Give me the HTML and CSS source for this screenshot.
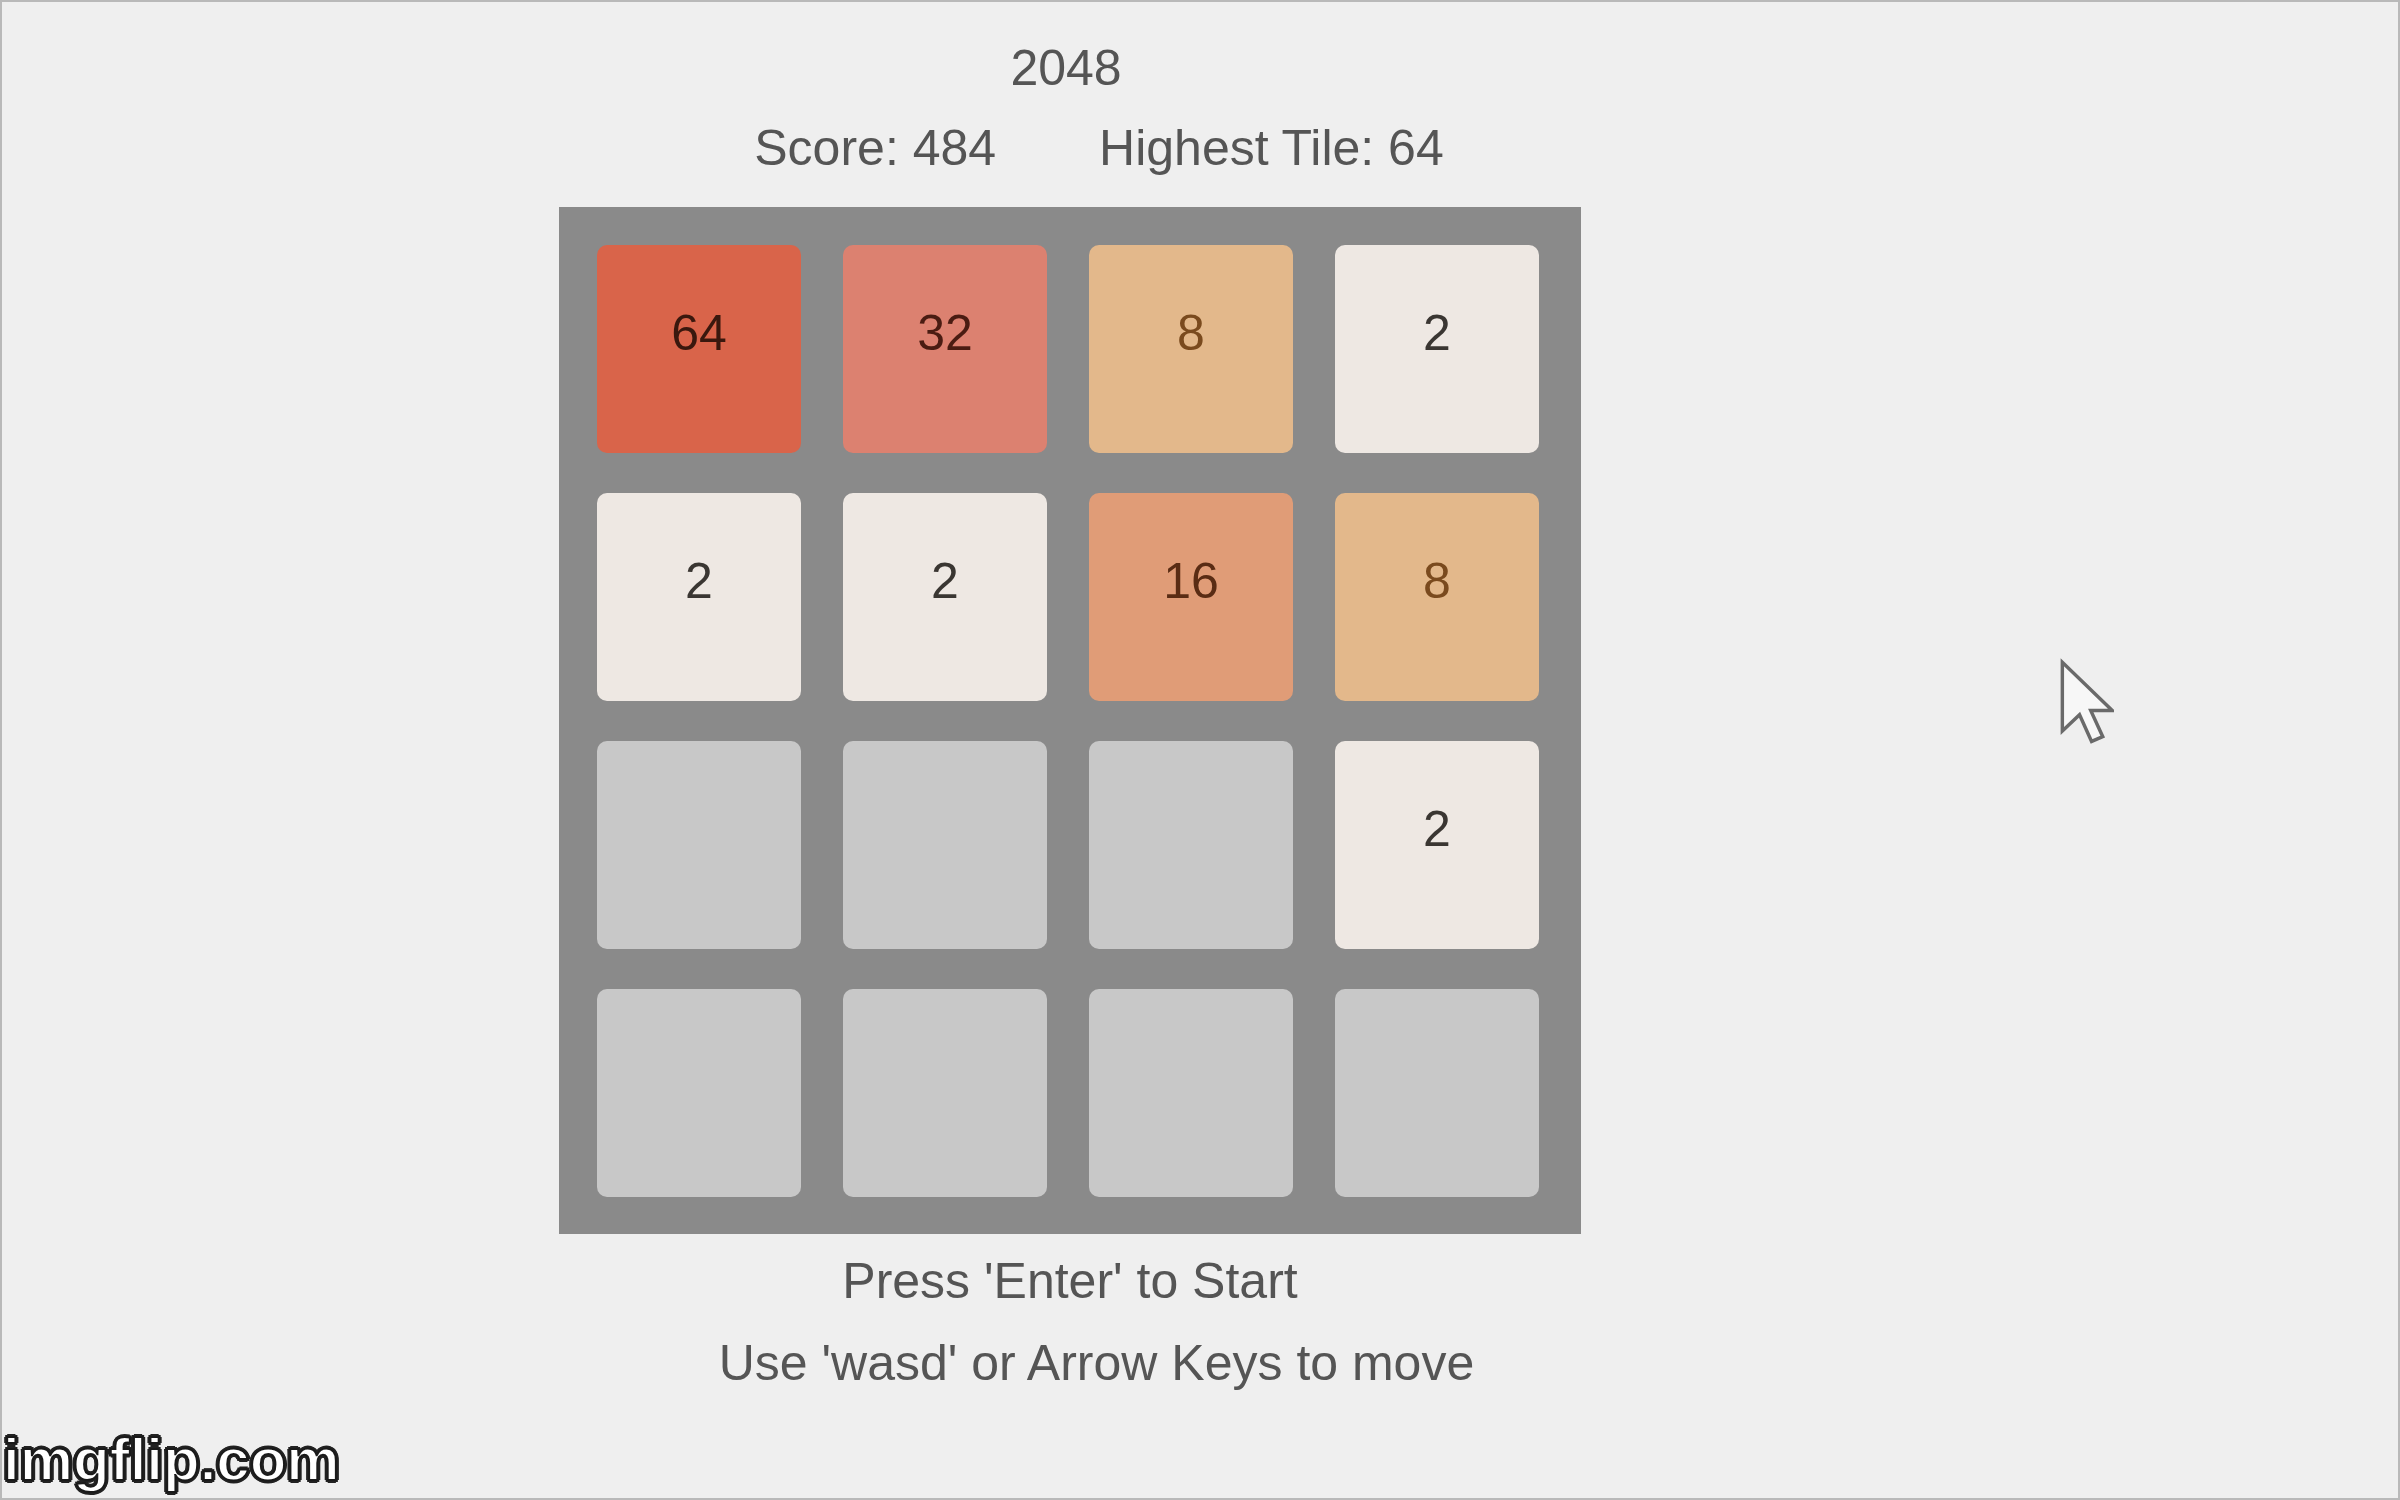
FILE: index.html
```html
<!DOCTYPE html>
<html lang="en">
<head>
<meta charset="utf-8">
<title>2048</title>
<link rel="stylesheet" href="styles.css">
</head>
<body>
<main class="game">
  <div class="title">2048</div>
  <div class="scores">
    <span class="score">Score: 484</span>
    <span class="highest">Highest Tile: 64</span>
  </div>
  <div class="board">
    <div class="tile t64">64</div>
    <div class="tile t32">32</div>
    <div class="tile t8">8</div>
    <div class="tile t2">2</div>
    <div class="tile t2">2</div>
    <div class="tile t2">2</div>
    <div class="tile t16">16</div>
    <div class="tile t8">8</div>
    <div class="tile empty"></div>
    <div class="tile empty"></div>
    <div class="tile empty"></div>
    <div class="tile t2">2</div>
    <div class="tile empty"></div>
    <div class="tile empty"></div>
    <div class="tile empty"></div>
    <div class="tile empty"></div>
  </div>
  <div class="press">Press 'Enter' to Start</div>
  <div class="hint">Use 'wasd' or Arrow Keys to move</div>
</main>
<svg class="cursor" width="56" height="86" viewBox="0 0 13 20" aria-hidden="true">
  <path d="M1 1 L1 17 L5 13.2 L7.8 19.4 L10.4 18.3 L7.6 12.2 L12.6 12.2 Z" fill="#f7f7f7" stroke="#6a6a6a" stroke-width="0.8" stroke-linejoin="miter"/>
</svg>
<div class="watermark">imgflip.com</div>
</body>
</html>
```
FILE: styles.css
```css
html, body {
  margin: 0;
  padding: 0;
}
body {
  box-sizing: border-box;
  width: 2400px;
  height: 1500px;
  background: #efefef;
  border: 2px solid #b9b9b9;
  position: relative;
  overflow: hidden;
  font-family: "Liberation Sans", Arial, sans-serif;
  color: #555555;
}
.game {
  width: 1022px;
  margin-left: 557px;
  padding-top: 37px;
  display: flex;
  flex-direction: column;
}
.title,
.scores,
.press,
.hint {
  font-size: 50px;
  line-height: 58px;
  white-space: nowrap;
}
.title {
  text-align: center;
  padding-right: 8px;
}
.scores {
  margin-top: 22px;
  display: flex;
  justify-content: center;
  gap: 103px;
  padding-left: 58px;
}
.board {
  margin-top: 30px;
  box-sizing: border-box;
  width: 1022px;
  height: 1027px;
  padding: 38px 42px 37px 38px;
  background: #8a8a8a;
  display: grid;
  grid-template-columns: repeat(4, 204px);
  grid-template-rows: repeat(4, 208px);
  column-gap: 42px;
  row-gap: 40px;
}
.tile {
  border-radius: 10px;
  box-sizing: border-box;
  padding-top: 59px;
  text-align: center;
  font-size: 50px;
  line-height: 58px;
  color: #3a3a3a;
}
.empty { background: #c8c8c8; }
.t2 { background: #eee8e3; color: #3a3632; }
.t8 { background: #e3b88b; color: #7a4a1e; }
.t16 { background: #e09c77; color: #5a2c14; }
.t32 { background: #dc8170; color: #4a1c12; }
.t64 { background: #d9644a; color: #3a180e; }
.press {
  margin-top: 18px;
  text-align: center;
}
.hint {
  margin-top: 24px;
  text-align: center;
  padding-left: 53px;
}
.cursor {
  position: absolute;
  left: 2056px;
  top: 656px;
}
.watermark {
  position: absolute;
  left: 1px;
  top: 1428px;
  font-family: "Liberation Sans", Arial, sans-serif;
  font-weight: bold;
  font-size: 60px;
  line-height: 60px;
  color: #ffffff;
  -webkit-text-stroke: 2px #1a1a1a;
  text-shadow: 2px 2px 0 #222, -2px -2px 0 #222, 2px -2px 0 #222, -2px 2px 0 #222,
    0 3px 0 #222, 0 -3px 0 #222, 3px 0 0 #222, -3px 0 0 #222;
  white-space: nowrap;
}
```
